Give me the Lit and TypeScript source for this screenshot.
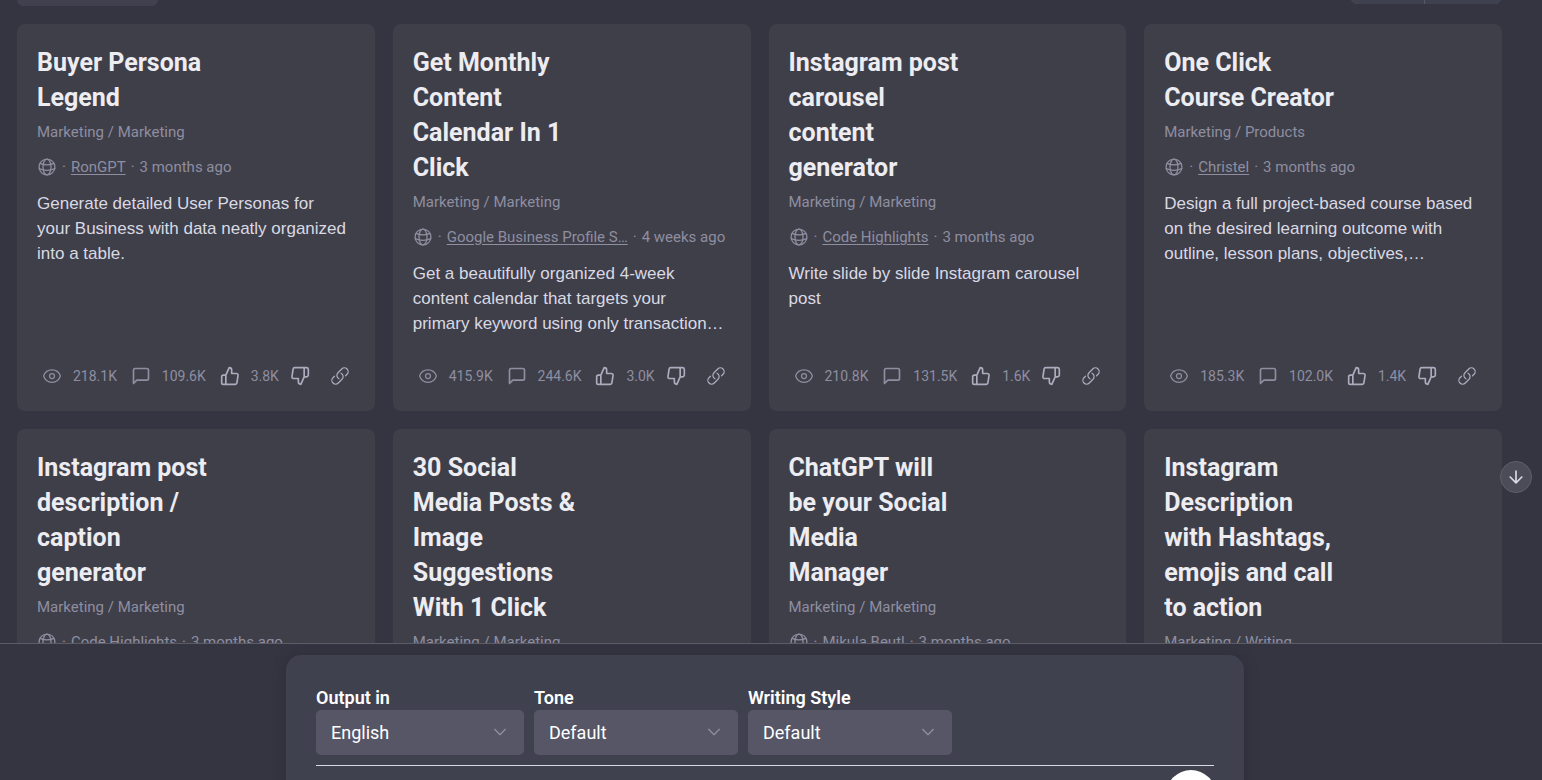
import { LitElement, html, svg, css } from "lit";
import { customElement, property } from "lit/decorators.js";

interface Prompt {
  title: string;
  category: string;
  author: string;
  age: string;
  teaser: string;
  views: string;
  uses: string;
  likes: string;
}

const prompts: Prompt[] = [
  { title: "Buyer Persona Legend", category: "Marketing / Marketing", author: "RonGPT", age: "3 months ago", teaser: "Generate detailed User Personas for\nyour Business with data neatly organized\ninto a table.", views: "218.1K", uses: "109.6K", likes: "3.8K" },
  { title: "Get Monthly Content Calendar In 1 Click", category: "Marketing / Marketing", author: "Google Business Profile S…", age: "4 weeks ago", teaser: "Get a beautifully organized 4-week\ncontent calendar that targets your\nprimary keyword using only transaction…", views: "415.9K", uses: "244.6K", likes: "3.0K" },
  { title: "Instagram post carousel content generator", category: "Marketing / Marketing", author: "Code Highlights", age: "3 months ago", teaser: "Write slide by slide Instagram carousel\npost", views: "210.8K", uses: "131.5K", likes: "1.6K" },
  { title: "One Click Course Creator", category: "Marketing / Products", author: "Christel", age: "3 months ago", teaser: "Design a full project-based course based\non the desired learning outcome with\noutline, lesson plans, objectives,…", views: "185.3K", uses: "102.0K", likes: "1.4K" },
  { title: "Instagram post description / caption generator", category: "Marketing / Marketing", author: "Code Highlights", age: "3 months ago", teaser: "", views: "", uses: "", likes: "" },
  { title: "30 Social Media Posts & Image Suggestions With 1 Click", category: "Marketing / Marketing", author: "", age: "", teaser: "", views: "", uses: "", likes: "" },
  { title: "ChatGPT will be your Social Media Manager", category: "Marketing / Marketing", author: "Mikula Beutl", age: "3 months ago", teaser: "", views: "", uses: "", likes: "" },
  { title: "Instagram Description with Hashtags, emojis and call to action", category: "Marketing / Writing", author: "", age: "", teaser: "", views: "", uses: "", likes: "" },
];

const shapes = {
  globe: svg`<circle cx="12" cy="12" r="9.5"/><ellipse cx="12" cy="12" rx="4.8" ry="9.5"/><path d="M3.6 7.6c5 2.2 11.800 2.200 16.800 0M2.500 14c6 2.500 13 2.500 19 0"/>`,
  eye: svg`<path d="M2.036 12.322a1.012 1.012 0 0 1 0-.639C3.423 7.510 7.360 4.500 12 4.500c4.638 0 8.573 3.007 9.963 7.178.07.207.07.431 0 .639C20.577 16.490 16.640 19.500 12 19.500c-4.638 0-8.573-3.007-9.963-7.178z"/><circle cx="12" cy="12" r="3"/>`,
  chat: svg`<path d="M21 15a2 2 0 0 1-2 2H7l-4 4V5a2 2 0 0 1 2-2h14a2 2 0 0 1 2 2z"/>`,
  up: svg`<path d="M14 9V5a3 3 0 0 0-3-3l-4 9v11h11.280a2 2 0 0 0 2-1.700l1.380-9a2 2 0 0 0-2-2.300zM7 22H4a2 2 0 0 1-2-2v-7a2 2 0 0 1 2-2h3"/>`,
  down: svg`<path d="M10 15v4a3 3 0 0 0 3 3l4-9V2H5.720a2 2 0 0 0-2 1.700l-1.380 9a2 2 0 0 0 2 2.300zm7-13h2.670A2.310 2.310 0 0 1 22 4v7a2.310 2.310 0 0 1-2.330 2H17"/>`,
  link: svg`<path d="M13.190 8.688a4.500 4.500 0 0 1 1.242 7.244l-4.500 4.500a4.500 4.500 0 0 1-6.364-6.364l1.757-1.757m13.350-.622 1.757-1.757a4.500 4.500 0 0 0-6.364-6.364l-4.500 4.500a4.500 4.500 0 0 0 1.242 7.244"/>`,
  arrow: svg`<path d="M12 5v14M5 12l7 7 7-7"/>`,
  chevron: svg`<path d="M4 8l8 8 8-8"/>`,
};

@customElement("ui-icon")
export class UiIcon extends LitElement {
  @property() name: keyof typeof shapes = "eye";

  static styles = css`
    :host { display: inline-flex; flex: none; width: 20px; height: 20px; }
    .glyph {
      width: 100%; height: 100%; fill: none; stroke: currentColor;
      stroke-width: var(--stroke, 1.5); stroke-linecap: round; stroke-linejoin: round;
    }
  `;

  render() {
    return html`<svg class="glyph" viewBox="0 0 24 24" aria-hidden="true">${shapes[this.name]}</svg>`;
  }
}

@customElement("prompt-card")
export class PromptCard extends LitElement {
  @property({ attribute: false }) prompt!: Prompt;

  static styles = css`
    :host {
      display: flex; flex-direction: column; box-sizing: border-box; min-width: 0; min-height: 387px;
      padding: 21px 20px 20px; border-radius: 8px; background: #3f3f4a; color: #8e8ea0;
      font-size: 15px; line-height: 35px;
    }
    .title {
      margin: 0; max-width: 173px; color: #ececf1;
      font-size: 25px; line-height: 35px; font-weight: 700;
    }
    .category { margin: 0; }
    .meta { display: flex; align-items: center; gap: 5px; white-space: nowrap; }
    .meta ui-icon { margin-bottom: 2px; }
    .author {
      color: inherit; text-decoration: underline; text-underline-offset: 2px;
    }
    .teaser {
      margin: 6px 0 0; color: #d9d9e3; font-family: "Liberation Sans", sans-serif;
      font-size: 17px; line-height: 25px; white-space: pre-line;
    }
    .stats {
      display: flex; align-items: center; justify-content: space-between;
      margin-top: auto; padding: 0 5px; height: 30px; font-size: 14px; line-height: 30px;
    }
    .stat { display: flex; align-items: center; gap: 11px; }
    .chat { --stroke: 2; }
    .action {
      display: flex; align-items: center; gap: 11px; padding: 0; border: 0;
      background: none; color: inherit; font: inherit; cursor: pointer;
    }
    .vote { --stroke: 2; }
    .vote ui-icon, .share ui-icon { color: #acacbe; }
    .votes { display: flex; align-items: center; gap: 11px; }
    .share { margin-left: 6px; }
  `;

  render() {
    const p = this.prompt;
    return html`
      <h3 class="title">${p.title}</h3>
      <p class="category">${p.category}</p>
      ${p.author ? html`<div class="meta">
        <ui-icon name="globe"></ui-icon><span>·</span>
        <a class="author" href="#">${p.author}</a><span>·</span><span>${p.age}</span>
      </div>` : ""}
      ${p.teaser ? html`<p class="teaser">${p.teaser}</p>` : ""}
      ${p.views ? html`<div class="stats">
        <span class="stat"><ui-icon name="eye"></ui-icon>${p.views}</span>
        <span class="stat chat"><ui-icon name="chat"></ui-icon>${p.uses}</span>
        <span class="votes">
          <button class="action vote" aria-label="Like"><ui-icon name="up"></ui-icon>${p.likes}</button>
          <button class="action vote" aria-label="Dislike"><ui-icon name="down"></ui-icon></button>
        </span>
        <button class="action share" aria-label="Copy link"><ui-icon name="link"></ui-icon></button>
      </div>` : ""}
    `;
  }
}

@customElement("app-root")
export class AppRoot extends LitElement {
  static styles = css`
    :host {
      display: flex; flex-direction: column; position: relative; height: 100vh; overflow: hidden;
      background: #343541; font-family: Roboto, "Liberation Sans", sans-serif;
    }
    .feed { flex: 1; min-height: 0; overflow: hidden; padding: 0 40px 0 17px; }
    .pager { display: flex; justify-content: space-between; align-items: flex-start; margin: -34px 0 18px; }
    .chip { height: 40px; border: 0; background: #40414f; border-radius: 6px; }
    .size { width: 141px; }
    .steps { display: flex; gap: 1px; border-radius: 8px; overflow: hidden; background: #565869; }
    .step { width: 77px; height: 38px; border-radius: 0; }
    .step:first-child { width: 74px; }
    .cards { display: grid; grid-template-columns: repeat(4, minmax(0, 1fr)); gap: 18px; }
    .jump {
      position: absolute; right: 10px; top: 461px; width: 32px; height: 32px; padding: 0;
      display: flex; align-items: center; justify-content: center; border-radius: 50%;
      border: 1px solid #5f5f6c; background: #4c4c59; color: #d9d9e3; --stroke: 2;
    }
    .composer {
      flex: none; height: 125px; overflow: hidden; border-top: 1px solid #5c5c68;
      padding: 11px 12px 0 0;
    }
    .panel {
      position: relative; box-sizing: border-box; max-width: 958px; min-height: 200px; margin: 0 auto;
      padding: 30px; border-radius: 15px; background: #40414f; box-shadow: 0 0 16px rgba(0, 0, 0, 0.15);
    }
    .fields { display: flex; gap: 10px; padding-bottom: 10px; border-bottom: 1px solid #d9d9e3; }
    .field { display: flex; flex-direction: column; width: 204px; color: #fff; font-size: 18px; line-height: 25px; }
    .wide { width: 208px; }
    .name { font-weight: 600; }
    .pick { display: grid; align-items: center; }
    .pick > * { grid-area: 1 / 1; }
    .select {
      appearance: none; width: 100%; height: 45px; padding: 0 15px; border: 0; border-radius: 5px;
      background: #565667; color: #fff; font: inherit;
    }
    .chevron { justify-self: end; margin: 0 16px 2px 0; width: 16px; height: 16px; color: #8e8ea0; --stroke: 2; pointer-events: none; }
    .send {
      position: absolute; right: 28px; top: 115px; width: 50px; height: 50px;
      border: 0; border-radius: 50%; background: #fff;
    }
  `;

  private field(id: string, label: string, value: string, wide = false) {
    return html`<div class="field ${wide ? "wide" : ""}">
      <label class="name" for=${id}>${label}</label>
      <span class="pick">
        <select class="select" id=${id}><option>${value}</option></select>
        <ui-icon class="chevron" name="chevron"></ui-icon>
      </span>
    </div>`;
  }

  render() {
    return html`
      <main class="feed">
        <div class="pager">
          <button class="chip size" aria-label="Page size"></button>
          <div class="steps">
            <button class="chip step" aria-label="Previous"></button>
            <button class="chip step" aria-label="Next"></button>
          </div>
        </div>
        <div class="cards">${prompts.map((p) => html`<prompt-card .prompt=${p}></prompt-card>`)}</div>
      </main>
      <button class="jump" aria-label="Scroll down"><ui-icon name="arrow"></ui-icon></button>
      <form class="composer">
        <div class="panel">
          <div class="fields">
            ${this.field("language", "Output in", "English", true)}
            ${this.field("tone", "Tone", "Default")}
            ${this.field("style", "Writing Style", "Default")}
          </div>
          <button class="send" type="button" aria-label="Send"></button>
        </div>
      </form>
    `;
  }
}
